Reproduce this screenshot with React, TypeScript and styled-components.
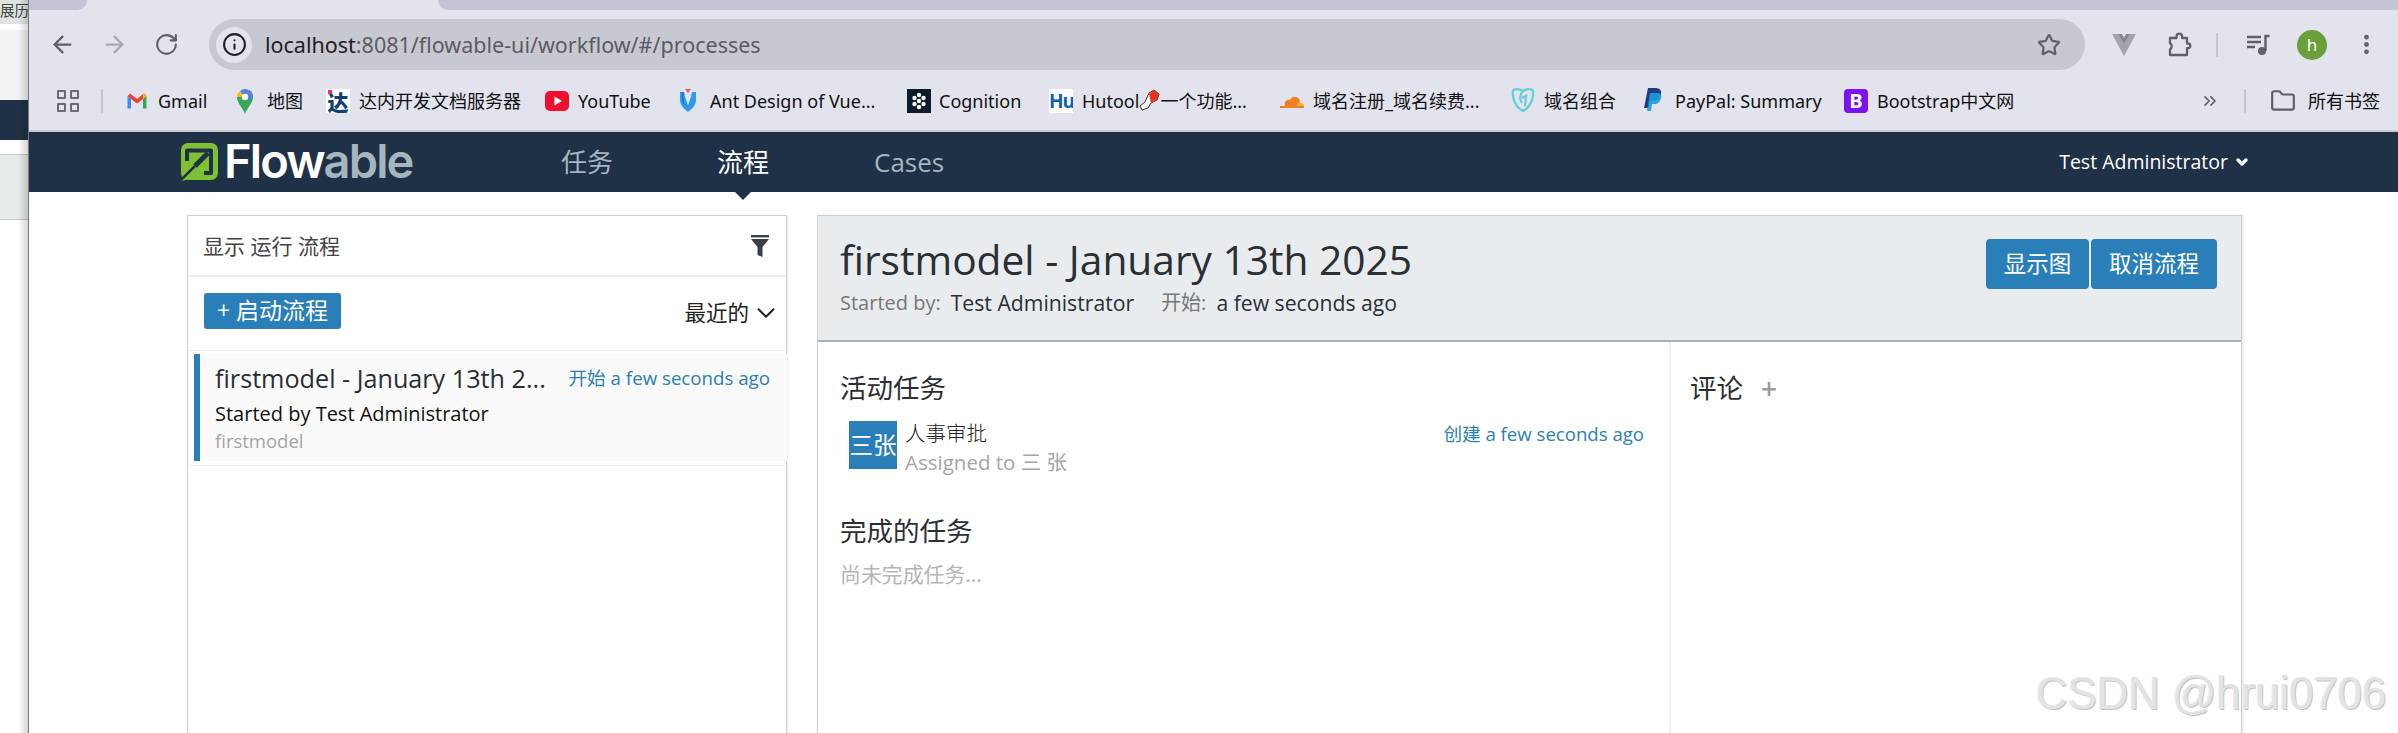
import React from "react";
import styled, { createGlobalStyle } from "styled-components";
import { ArrowLeft, ArrowRight, RotateCw, Info, Star, MoreVertical, Folder, ChevronsRight, ChevronDown } from "lucide-react";

const BLUE = "#2a7fb8";
const SANS = `"Open Sans", "Noto Sans CJK SC", sans-serif`;
const UI = `"Noto Sans", "Noto Sans CJK SC", sans-serif`;

const Global = createGlobalStyle`
  html, body { margin: 0; padding: 0; height: 733px; overflow: hidden; background: #fff; }
  #root { height: 733px; }
  * { box-sizing: border-box; }
`;

const Page = styled.div`
  position: relative; display: flex; width: 2398px; height: 733px; overflow: hidden;
  font-family: ${SANS}; color: #2b2f33;
`;

/* the window behind the browser */
const BackStrip = styled.div`
  position: relative; width: 29px; flex: none; display: flex; flex-direction: column; overflow: hidden;
  border-right: 1px solid #77797b;
  background: #fff;
`;
const BackShadow = styled.div`
  position: absolute; inset: 0 0 0 auto; width: 10px;
  background: linear-gradient(to right, rgba(0,0,0,0), rgba(0,0,0,0.16));
`;
const BackBand = styled.div<{ $h: number; $bg: string; $line?: boolean }>`
  height: ${(p) => p.$h}px; flex: none; background: ${(p) => p.$bg};
  border-bottom: ${(p) => (p.$line ? "1px solid #c4c8c8" : "none")};
  overflow: hidden; white-space: nowrap;
  font: 14.5px/21px ${UI}; color: #444;
`;

const Win = styled.div`
  flex: 1; min-width: 0; display: flex; flex-direction: column; background: #c3c4d6;
`;
const TabStrip = styled.div`
  height: 10px; flex: none; display: flex; background: #e2e3ec;
`;
const StripGap = styled.div<{ $w?: number }>`
  background: #c3c4d6;
  ${(p) => (p.$w ? `width:${p.$w}px; border-bottom-right-radius:10px;` : "flex:1; border-bottom-left-radius:10px;")}
`;
const ActiveTab = styled.div`
  width: 351px; background: #e2e3ec;
`;
const Chrome = styled.div`
  flex: none; height: 120px; background: #e2e3ec; display: flex; flex-direction: column;
  padding-top: 9px; position: relative;
`;
const TopRow = styled.div`
  height: 51px; flex: none; display: flex; align-items: center; padding-left: 7px;
`;
const NavBtn = styled.div<{ $c: string }>`
  width: 52px; height: 51px; flex: none; display: flex; align-items: center; justify-content: center; color: ${(p) => p.$c};
`;
const Omni = styled.div`
  margin-left: 17px; width: 1876px; height: 51px; border-radius: 26px; background: #c8c8d2;
  display: flex; align-items: center; padding: 0 24px 0 7px; flex: none;
`;
const InfoChip = styled.div`
  width: 36px; height: 36px; border-radius: 50%; background: #e2e3ec; display: flex; align-items: center; justify-content: center; color: #202124; flex: none;
`;
const Url = styled.div`
  margin-left: 13px; font: 21.5px/30px ${UI}; color: #5a5c64; flex: 1; white-space: nowrap;
  b { font-weight: 400; color: #202124; }
`;
const ExtSlot = styled.div<{ $w: number; $pl?: number }>`
  width: ${(p) => p.$w}px; flex: none; height: 51px; display: flex; align-items: center; justify-content: center; color: #5f6066;
  padding-left: ${(p) => p.$pl ?? 0}px;
`;
const VertSep = styled.div<{ $h: number; $l?: number; $r?: number }>`
  width: 2px; height: ${(p) => p.$h}px; background: #c5c6d4; flex: none; border-radius: 1px;
  margin-left: ${(p) => p.$l ?? 0}px; margin-right: ${(p) => p.$r ?? 0}px;
`;
const Avatar = styled.div`
  width: 30px; height: 30px; flex: none; border-radius: 50%; background: #6a9f3a; color: #fff; font: 17px/30px ${UI}; text-align: center;
`;
const BookRow = styled.div`
  height: 60px; flex: none; display: flex; align-items: center; padding-left: 28px; padding-top: 1px;
`;
const AppsIcon = styled.div`
  width: 22px; height: 22px; flex: none; display: grid; grid-template-columns: 9px 9px; grid-template-rows: 9px 9px; gap: 4px;
  margin-right: 22px;
  i { display: block; border: 2px solid #6a6b70; border-radius: 1px; }
`;
const Book = styled.div<{ $w: number; $gap: number }>`
  width: ${(p) => p.$w}px; flex: none; display: flex; align-items: center; gap: ${(p) => p.$gap}px;
  font: 18px/26px ${UI}; color: #111; white-space: nowrap;
  svg { flex: none; }
`;
const Candy = styled.svg`
  vertical-align: -4px; margin: 0 -1px 0 0;
`;
const BookEnd = styled.div`
  margin-left: auto; display: flex; align-items: center; color: #5f6066; padding-right: 18px;
`;
const EndText = styled.span`
  font: 18px/26px ${UI}; color: #111; margin-left: 12px;
`;
const WhiteArea = styled.div`
  flex: 1; background: #fff; display: flex; flex-direction: column; border-top: 2px solid #c9c9d1; min-height: 0;
`;
const NavBar = styled.div`
  position: relative; height: 60px; flex: none; background: #1f3146; display: flex; align-items: center; padding-left: 151px;
`;
const Logo = styled.div`
  display: flex; align-items: center; width: 381px; flex: none;
`;
const LogoWord = styled.div`
  margin-left: 6px; font: 600 47px/60px Inter, sans-serif; letter-spacing: -1.9px; color: #fff; margin-top: -3px;
  span { color: #a5b6be; }
`;
const NavItem = styled.div<{ $on?: boolean; $w: number }>`
  position: relative; width: ${(p) => p.$w}px; flex: none; font: 26px/60px ${SANS}; color: ${(p) => (p.$on ? "#fff" : "#a5b6be")};
  ${(p) =>
    p.$on
      ? `&::after { content:""; position:absolute; left:18px; top:60px; border:8px solid transparent; border-top:8px solid #1f3146; border-bottom:0; }`
      : ""}
`;
const UserMenu = styled.div`
  margin-left: auto; margin-right: 148px; display: flex; align-items: center; gap: 6px; font: 19.5px/60px ${SANS}; color: #fff;
`;

const Content = styled.div`
  flex: 1; min-height: 0; display: flex; gap: 30px; padding: 23px 0 0 158px; overflow: hidden;
`;
const ListPanel = styled.div`
  width: 600px; flex: none; height: 700px; border: 1px solid #cfcfcf; border-bottom: 0; box-shadow: 1px 0 2px rgba(0,0,0,.08);
`;
const ListHead = styled.div`
  height: 61px; border-bottom: 2px solid #eeeeee; display: flex; align-items: center; justify-content: space-between; padding: 0 17px 0 15px;
  font: 21px/30px ${SANS}; color: #444;
`;
const ListTools = styled.div`
  height: 74px; display: flex; align-items: center; justify-content: space-between; padding: 0 5px 2px 16px;
  border-bottom: 1px solid #eeeeee;
`;
const StartBtn = styled.div`
  width: 137px; height: 36px; margin-bottom: 4px; background: ${BLUE}; border-radius: 3px; color: #fff; font: 23px/35px ${SANS}; text-align: center; white-space: nowrap;
`;
const Sort = styled.div`
  display: flex; align-items: center; gap: 2px; font: 21.5px/30px ${SANS}; color: #222;
`;
const ItemWrap = styled.div`
  padding: 3px 0 4px 6px; border-bottom: 1px solid #f0f0f0;
`;
const Item = styled.div`
  height: 107px; border-left: 6px solid ${BLUE}; background: #fafafa; padding: 9px 17px 0 15px; margin-right: -1px;
`;
const ItemTop = styled.div`
  display: flex; justify-content: space-between; align-items: center; height: 30px; white-space: nowrap;
`;
const ItemTitle = styled.div`
  font: 25.2px/30px ${SANS}; color: #2b2f33;
`;
const ItemTime = styled.div`
  font: 18.7px/30px ${SANS}; color: ${BLUE};
`;
const ItemBy = styled.div`
  margin-top: 8px; font: 20px/26px ${SANS}; color: #111;
`;
const ItemKey = styled.div`
  margin-top: 1px; font: 18.5px/26px ${SANS}; color: #a5a5a5;
`;

const DetailPanel = styled.div`
  width: 1425px; flex: none; height: 700px; border: 1px solid #cfcfcf; border-bottom: 0; display: flex; flex-direction: column;
  box-shadow: 1px 0 2px rgba(0,0,0,.12);
`;
const DetailHead = styled.div`
  height: 126px; flex: none; background: #e8ecef; border-bottom: 2px solid #a9b1b9; display: flex; justify-content: space-between; padding: 23px 24px 0 22px;
`;
const DetailTitle = styled.div`
  font: 40.7px/40px ${SANS}; color: #2b2f33; white-space: nowrap;
`;
const Meta = styled.div`
  margin-top: 9px; display: flex; font: 21.2px/30px ${SANS}; color: #2b2f33; white-space: nowrap;
`;
const MetaLabel = styled.span<{ $ml?: number }>`
  color: #777; font-size: 20px; margin-left: ${(p) => p.$ml ?? 0}px; margin-right: 10px;
`;
const Actions = styled.div`
  display: flex; gap: 2px;
`;
const ActionBtn = styled.div<{ $w: number }>`
  width: ${(p) => p.$w}px; height: 50px; background: ${BLUE}; border-radius: 4px; color: #fff; font: 22.5px/49px ${SANS}; text-align: center;
`;
const DetailBody = styled.div`
  flex: 1; display: flex; min-height: 0;
`;
const MainCol = styled.div`
  width: 853px; flex: none; border-right: 2px solid #eeeeee; padding: 27px 25px 0 22px;
`;
const SideCol = styled.div`
  flex: 1; padding: 27px 21px 0 19px;
`;
const SectionTitle = styled.div`
  font: 26.5px/38px ${SANS}; color: #2b2f33; display: flex; align-items: center;
`;
const TaskRow = styled.div`
  margin-top: 14px; display: flex; padding-left: 9px;
`;
const TaskAvatar = styled.div`
  width: 48px; height: 48px; flex: none; background: ${BLUE}; color: #fff; font: 23.5px/48px ${SANS}; text-align: center; white-space: nowrap; overflow: hidden;
`;
const TaskText = styled.div`
  margin-left: 8px; flex: 1; margin-top: -2px;
`;
const TaskName = styled.div`
  font: 300 20.5px/28px ${SANS}; color: #222;
`;
const TaskAssignee = styled.div`
  font: 20.5px/30px ${SANS}; color: #a5a5a5;
`;
const TaskTime = styled.div`
  font: 18.6px/26px ${SANS}; color: ${BLUE}; white-space: nowrap;
`;
const DoneTitle = styled(SectionTitle)`
  margin-top: 35px;
`;
const Empty = styled.div`
  margin-top: 10px; font: 20.9px/28px ${SANS}; color: #b5b5b5;
`;
const AddPlus = styled.span`
  margin-left: 18px; color: #999; font-size: 28px; font-weight: 600; line-height: 38px;
`;
const Watermark = styled.div`
  position: absolute; left: 2036px; top: 664px; font: 46px/58px "Liberation Sans", sans-serif; color: #e3e3e3; white-space: nowrap;
  transform: scaleX(0.95); transform-origin: left center;
  text-shadow: 1px 1px 0 #c4c4c4, -1px 0 0 #eee;
`;

const Gmail = () => (
  <svg width="22" height="18" viewBox="0 0 22 18">
    <path d="M1.5 4v12.500h3.500V7z" fill="#4285f4" />
    <path d="M17 7v9.500h3.500V4z" fill="#34a853" />
    <path d="M1.500 4 5 7l6 4.600L17 7l3.500-3-2.500-2.500L11 7 4 1.500z" fill="#ea4335" />
    <path d="M17 7V2l3.500 2z" fill="#fbbc04" />
  </svg>
);
const MapsPin = () => (
  <svg width="18" height="26" viewBox="0 0 18 26">
    <path d="M9 26C7 20 1 15 1 9h8z" fill="#34a853" />
    <path d="M9 26c2-6 8-11 8-17H9z" fill="#34a853" />
    <path d="M1 9a8 8 0 0 1 3-6l5 6z" fill="#fbbc04" />
    <path d="M4 3a8 8 0 0 1 9-1L9 9z" fill="#4285f4" />
    <path d="M13 2a8 8 0 0 1 4 7H9z" fill="#ea4335" opacity=".9" />
    <path d="M13 2a8 8 0 0 1 4 7L11 13z" fill="#4285f4" />
    <circle cx="9" cy="9" r="3.200" fill="#fff" />
  </svg>
);
const TileDa = styled.div`
  width: 24px; height: 24px; flex: none; background: #fff; position: relative; color: #12406e;
  font: 800 21px/25px "Noto Sans CJK SC", sans-serif; text-align: center;
`;
const Dot = styled.i`
  position: absolute; left: 2px; top: 1px; width: 4px; height: 4px; background: #e0357a;
`;
const Yt = () => (
  <svg width="24" height="24" viewBox="0 0 24 24">
    <rect y="2" width="24" height="20" rx="5" fill="#f00f2e" />
    <path d="M9.500 7.500v9l7.500-4.500z" fill="#fff" />
  </svg>
);
const AntV = () => (
  <svg width="18" height="24" viewBox="0 0 18 24">
    <path d="M1 3h4l4 13 4-13h4v8c0 5-4 9-8 12-4-3-8-7-8-12z" fill="#2f9bf0" />
    <path d="M4.500 3v8c0 3 2 5.500 4.500 7.500-4-2-6-5-6-8V3z" fill="#1772d0" />
    <path d="M9 16 5.500 6h2L9 11l1.500-5h2z" fill="#e2e3ec" />
    <path d="M6 0h6L9 4z" fill="#e8596a" />
  </svg>
);
const CogTile = styled.div`
  width: 24px; height: 24px; flex: none; background: #0d1b2a; display: flex; align-items: center; justify-content: center;
`;
const Cog = () => (
  <CogTile>
    <svg width="16" height="18" viewBox="0 0 16 18" fill="#fff">
      <circle cx="8" cy="3" r="2.200" /><circle cx="3.500" cy="6" r="2.200" /><circle cx="12.500" cy="6" r="2.200" />
      <circle cx="3.500" cy="12" r="2.200" /><circle cx="12.500" cy="12" r="2.200" /><circle cx="8" cy="15" r="2.200" />
      <circle cx="8" cy="9" r="2.200" />
    </svg>
  </CogTile>
);
const HuTile = styled.div`
  width: 24px; height: 24px; flex: none; background: #fff; color: #0b61ad; font: 700 19px/24px "Open Sans", sans-serif; text-align: center; letter-spacing: -1px; overflow: hidden;
`;
const Cloud = () => (
  <svg width="24" height="16" viewBox="0 0 24 16">
    <path d="M5 13c-1-5 2-7 5-6 1-4 8-5 10 1l-1 5z" fill="#f38020" />
    <path d="M17 13c0-3 2-4 4-3 2 0 3 2 3 3z" fill="#fbad41" />
    <rect y="13" width="24" height="2" fill="#f38020" />
  </svg>
);
const TealLogo = () => (
  <svg width="24" height="25" viewBox="0 0 24 25" fill="none" stroke="#63cfd4" strokeWidth="2.200">
    <path d="M12 3C9 1 3 0 2 3c-1 6 2 16 10 20 8-4 11-14 10-20-1-3-7-2-10 0-3 3-4 8-1 12" />
    <path d="M11 10l4-2-1 10" />
  </svg>
);
const PayPal = () => (
  <svg width="18" height="25" viewBox="0 0 18 25">
    <path d="M4 0h7c4 0 7 2 6 6-1 5-4 7-8 7H6l-1 7H0z" fill="#253b80" />
    <path d="M6 5h7c3 0 5 1 4 5-1 4-3 6-7 6H8l-1 7H3z" fill="#1a9fe0" opacity=".9" />
  </svg>
);
const BsTile = styled.div`
  width: 24px; height: 24px; flex: none; border-radius: 4px; background: #7c12f0; color: #fff; font: 700 20px/24px "Open Sans", sans-serif; text-align: center;
`;
const VueMono = () => (
  <svg width="24" height="24" viewBox="0 0 24 24">
    <path d="M0 1h6l6 10 6-10h6L12 23z" fill="#a4a4a8" />
    <path d="M6 1h4l2 4 2-4h4l-6 10z" fill="#85868a" />
  </svg>
);
const ExtPuzzle = () => (
  <svg width="25" height="25" viewBox="0 0 25 25" fill="none" stroke="#5f6066" strokeWidth="2.300" strokeLinejoin="round">
    <path d="M3 6h6.500V4.500a2.800 2.800 0 0 1 5.600 0V6H20v5.500h1a2.300 2.300 0 0 1 0 4.600h-1V23H3v-5.500a4 4 0 0 0 0-6.500z" />
  </svg>
);
const MediaIcon = () => (
  <svg width="25" height="24" viewBox="0 0 25 24" fill="none" stroke="#5f6066" strokeWidth="2.400">
    <path d="M1 4h14M1 9h14M1 14h8" />
    <path d="M19.500 18V3h4" />
    <circle cx="16" cy="18" r="4" fill="#5f6066" stroke="none" />
  </svg>
);
const FilterIcon = () => (
  <svg width="18" height="22" viewBox="0 0 18 22" fill="#3a3f44">
    <rect x="0" y="0" width="18" height="2.400" />
    <path d="M0 4h18l-6.500 8v10l-5-2v-8z" />
  </svg>
);
const FlowMark = () => (
  <svg width="38" height="38" viewBox="0 0 38 38" fill="none">
    <rect x="1" y="0" width="37" height="37" rx="7" fill="#7fc034" />
    <path d="M0 38 7 30l3 3-4 4z" fill="#7fc034" />
    <path d="M7 18V7.500h24V30h-7" stroke="#1f3146" strokeWidth="4" strokeLinejoin="round" />
    <path d="M0 38 15 23" stroke="#1f3146" strokeWidth="2.500" />
    <path d="M15 23 28 10" stroke="#1f3146" strokeWidth="5" />
  </svg>
);

const App = () => (
  <Page>
    <Global />
    <BackStrip>
      <BackBand $h={24} $bg="#dfe4e3">展历程</BackBand>
      <BackBand $h={6} $bg="#fff" />
      <BackBand $h={70} $bg="#f3f3f3" />
      <BackBand $h={40} $bg="#1f3146" />
      <BackBand $h={15} $bg="#fff" $line />
      <BackBand $h={65} $bg="#e5ecea" $line />
      <BackBand $h={513} $bg="#fff" />
      <BackShadow />
    </BackStrip>
    <Win>
      <TabStrip>
        <StripGap $w={58} />
        <ActiveTab />
        <StripGap />
      </TabStrip>
      <Chrome>
        <TopRow>
          <NavBtn $c="#5f6066"><ArrowLeft size={27} strokeWidth={2} /></NavBtn>
          <NavBtn $c="#a8a9b0"><ArrowRight size={27} strokeWidth={2} /></NavBtn>
          <NavBtn $c="#5f6066"><RotateCw size={25} strokeWidth={2} /></NavBtn>
          <Omni>
            <InfoChip><Info size={25} strokeWidth={2} /></InfoChip>
            <Url><b>localhost</b>:8081/flowable-ui/workflow/#/processes</Url>
            <Star size={24} strokeWidth={2.200} color="#5f6066" />
          </Omni>
          <ExtSlot $w={78}><VueMono /></ExtSlot>
          <ExtSlot $w={32}><ExtPuzzle /></ExtSlot>
          <VertSep $h={24} $l={21} />
          <ExtSlot $w={80}><MediaIcon /></ExtSlot>
          <ExtSlot $w={28}><Avatar>h</Avatar></ExtSlot>
          <ExtSlot $w={72} $pl={8}><MoreVertical size={25} strokeWidth={2.600} /></ExtSlot>
        </TopRow>
        <BookRow>
          <AppsIcon><i /><i /><i /><i /></AppsIcon>
          <VertSep $h={24} $r={23} />
          <Book $w={110} $gap={10}><Gmail />Gmail</Book>
          <Book $w={90} $gap={13}><MapsPin />地图</Book>
          <Book $w={219} $gap={9}><TileDa><Dot />达</TileDa>达内开发文档服务器</Book>
          <Book $w={134} $gap={9}><Yt />YouTube</Book>
          <Book $w={228} $gap={13}><AntV />Ant Design of Vue...</Book>
          <Book $w={142} $gap={8}><Cog />Cognition</Book>
          <Book $w={231} $gap={9}>
            <HuTile>Hu</HuTile>
            <span>Hutool<Candy width="22" height="24" viewBox="0 0 22 24"><path d="M3 22 1 18l5-4 4-9 5-3 5 4-2 6-6 3-3 5z" fill="#fff" stroke="#333" strokeWidth="1" /><path d="M10 6l5-4 5 4-2 6-6 3z" fill="#e8361e" /></Candy>一个功能...</span>
          </Book>
          <Book $w={231} $gap={9}><Cloud />域名注册_域名续费...</Book>
          <Book $w={133} $gap={9}><TealLogo />域名组合</Book>
          <Book $w={200} $gap={13}><PayPal />PayPal: Summary</Book>
          <Book $w={190} $gap={9}><BsTile>B</BsTile>Bootstrap中文网</Book>
          <BookEnd>
            <ChevronsRight size={20} strokeWidth={2} />
            <VertSep $h={24} $l={24} $r={24} />
            <Folder size={26} strokeWidth={2} />
            <EndText>所有书签</EndText>
          </BookEnd>
        </BookRow>
      </Chrome>
      <WhiteArea>
        <NavBar>
          <Logo>
            <FlowMark />
            <LogoWord>Flow<span>able</span></LogoWord>
          </Logo>
          <NavItem $w={156}>任务</NavItem>
          <NavItem $w={157} $on>流程</NavItem>
          <NavItem $w={100}>Cases</NavItem>
          <UserMenu>Test Administrator<ChevronDown size={16} strokeWidth={5} /></UserMenu>
        </NavBar>
        <Content>
          <ListPanel>
            <ListHead>显示 运行 流程<FilterIcon /></ListHead>
            <ListTools>
              <StartBtn>+ 启动流程</StartBtn>
              <Sort>最近的<ChevronDown size={30} strokeWidth={1.600} /></Sort>
            </ListTools>
            <ItemWrap>
              <Item>
                <ItemTop>
                  <ItemTitle>firstmodel - January 13th 2...</ItemTitle>
                  <ItemTime>开始 a few seconds ago</ItemTime>
                </ItemTop>
                <ItemBy>Started by Test Administrator</ItemBy>
                <ItemKey>firstmodel</ItemKey>
              </Item>
            </ItemWrap>
          </ListPanel>
          <DetailPanel>
            <DetailHead>
              <div>
                <DetailTitle>firstmodel - January 13th 2025</DetailTitle>
                <Meta>
                  <MetaLabel>Started by:</MetaLabel>Test Administrator
                  <MetaLabel $ml={27}>开始:</MetaLabel>a few seconds ago
                </Meta>
              </div>
              <Actions>
                <ActionBtn $w={103}>显示图</ActionBtn>
                <ActionBtn $w={126}>取消流程</ActionBtn>
              </Actions>
            </DetailHead>
            <DetailBody>
              <MainCol>
                <SectionTitle>活动任务</SectionTitle>
                <TaskRow>
                  <TaskAvatar>三张</TaskAvatar>
                  <TaskText>
                    <TaskName>人事审批</TaskName>
                    <TaskAssignee>Assigned to 三 张</TaskAssignee>
                  </TaskText>
                  <TaskTime>创建 a few seconds ago</TaskTime>
                </TaskRow>
                <DoneTitle>完成的任务</DoneTitle>
                <Empty>尚未完成任务...</Empty>
              </MainCol>
              <SideCol>
                <SectionTitle>评论<AddPlus>+</AddPlus></SectionTitle>
              </SideCol>
            </DetailBody>
          </DetailPanel>
        </Content>
      </WhiteArea>
    </Win>
    <Watermark>CSDN @hrui0706</Watermark>
  </Page>
);

export default App;
